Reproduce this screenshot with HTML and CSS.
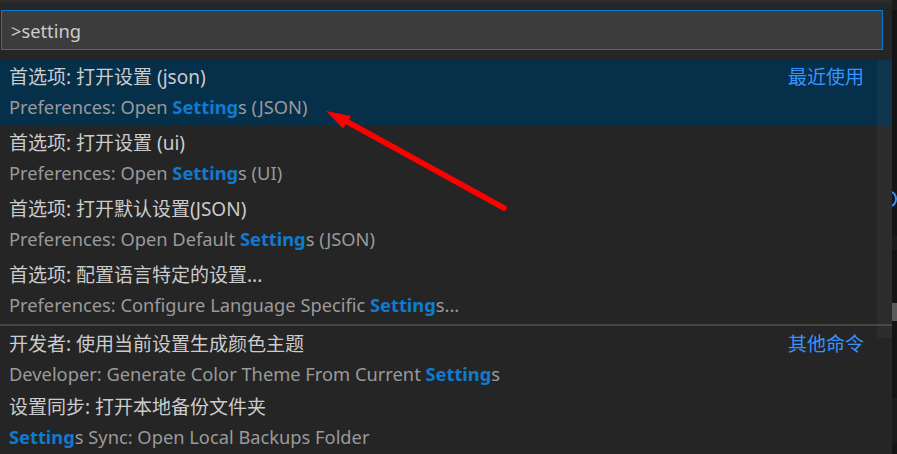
FILE: index.html
```html
<!DOCTYPE html>
<html>
<head>
<meta charset="utf-8">
<link rel="stylesheet" href="styles.css">
</head>
<body>
<div class="page">
  <div class="widget">
    <div class="input-wrap">
      <div class="input">&gt;setting</div>
    </div>
    <div class="list">
      <div class="row selected">
        <div class="label"><span>首选项: 打开设置 (json)</span><span class="tag">最近使用</span></div>
        <div class="detail">Preferences: Open <b>Setting</b>s (JSON)</div>
      </div>
      <div class="row">
        <div class="label"><span>首选项: 打开设置 (ui)</span></div>
        <div class="detail">Preferences: Open <b>Setting</b>s (UI)</div>
      </div>
      <div class="row">
        <div class="label"><span>首选项: 打开默认设置(JSON)</span></div>
        <div class="detail">Preferences: Open Default <b>Setting</b>s (JSON)</div>
      </div>
      <div class="row">
        <div class="label"><span>首选项: 配置语言特定的设置...</span></div>
        <div class="detail">Preferences: Configure Language Specific <b>Setting</b>s...</div>
      </div>
      <div class="row sep">
        <div class="label"><span>开发者: 使用当前设置生成颜色主题</span><span class="tag">其他命令</span></div>
        <div class="detail">Developer: Generate Color Theme From Current <b>Setting</b>s</div>
      </div>
      <div class="row">
        <div class="label"><span>设置同步: 打开本地备份文件夹</span></div>
        <div class="detail"><b>Setting</b>s Sync: Open Local Backups Folder</div>
      </div>
    </div>
    <div class="scroll-slider"></div>
  </div>
  <div class="strip">
    <div class="strip-top"></div>
    <div class="strip-gap1"></div>
    <div class="strip-o"></div>
    <div class="strip-gap2"></div>
    <div class="strip-band"></div>
    <div class="strip-gap3"></div>
    <div class="strip-grey"></div>
    <div class="strip-gap4"></div>
    <div class="strip-band2"></div>
  </div>
  <svg class="arrow" width="897" height="454" viewBox="0 0 897 454">
    <line x1="504" y1="208" x2="344" y2="120" stroke="#ff0000" stroke-width="5.5" stroke-linecap="round"/>
    <polygon points="326,111 351,116 343,128.5" fill="#ff0000"/>
  </svg>
</div>
</body>
</html>
```

FILE: styles.css
```css
html, body {
  margin: 0;
  padding: 0;
}
body {
  background: #141414;
  width: 897px;
  height: 454px;
  overflow: hidden;
  font-family: "Noto Sans", "Noto Sans CJK SC", sans-serif;
}
.page {
  position: relative;
  display: flex;
  width: 897px;
  height: 454px;
}
.widget {
  position: relative;
  width: 892px;
  flex: none;
  background: #252526;
  border-top: 3px solid #2c2c2c;
  padding-top: 7px;
  box-sizing: border-box;
  overflow: hidden;
}
.input-wrap {
  padding: 0 9px 10px 1px;
}
.input {
  height: 40px;
  box-sizing: border-box;
  border: 1px solid #007fd4;
  background: #3c3c3c;
  color: #cccccc;
  font-size: 18.3px;
  line-height: 40px;
  padding-left: 9px;
}
.list {
  display: flex;
  flex-direction: column;
}
.row {
  height: 66px;
  box-sizing: border-box;
  padding-left: 9px;
  padding-right: 28px;
  flex: none;
}
.row.selected {
  background: #062f4a;
}
.row.sep {
  border-top: 2px solid #454545;
  padding-top: 1px;
}
.label {
  display: flex;
  justify-content: space-between;
  color: #cccccc;
  font-size: 19px;
  line-height: 32px;
  padding-top: 1px;
}
.tag {
  color: #3794ff;
}
.detail {
  color: #9a9a9a;
  font-size: 18.3px;
  line-height: 26px;
  padding-top: 1px;
}
.detail b {
  color: #0f7bcf;
  font-weight: bold;
}
.scroll-slider {
  position: absolute;
  left: 877px;
  top: 57px;
  width: 15px;
  height: 278px;
  background: rgba(121, 121, 121, 0.09);
}
.strip {
  width: 5px;
  flex: none;
  display: flex;
  flex-direction: column;
  overflow: hidden;
  background: #141414;
}
.strip-top {
  height: 10px;
  background: #1c1c1c;
  flex: none;
}
.strip-gap1 {
  height: 181px;
  flex: none;
}
.strip-o {
  width: 9px;
  height: 12px;
  flex: none;
  border: 2px solid #3794ff;
  border-radius: 50%;
  margin-left: -8px;
}
.strip-gap2 {
  height: 29px;
  flex: none;
}
.strip-band {
  height: 14px;
  background: #1b1b1b;
  flex: none;
}
.strip-gap3 {
  height: 53px;
  flex: none;
}
.strip-grey {
  height: 18px;
  background: #5a5a5a;
  flex: none;
}
.strip-gap4 {
  height: 77px;
  flex: none;
}
.strip-band2 {
  height: 45px;
  background: #1b1b1b;
  flex: none;
}
.arrow {
  position: absolute;
  left: 0;
  top: 0;
  pointer-events: none;
}
```
